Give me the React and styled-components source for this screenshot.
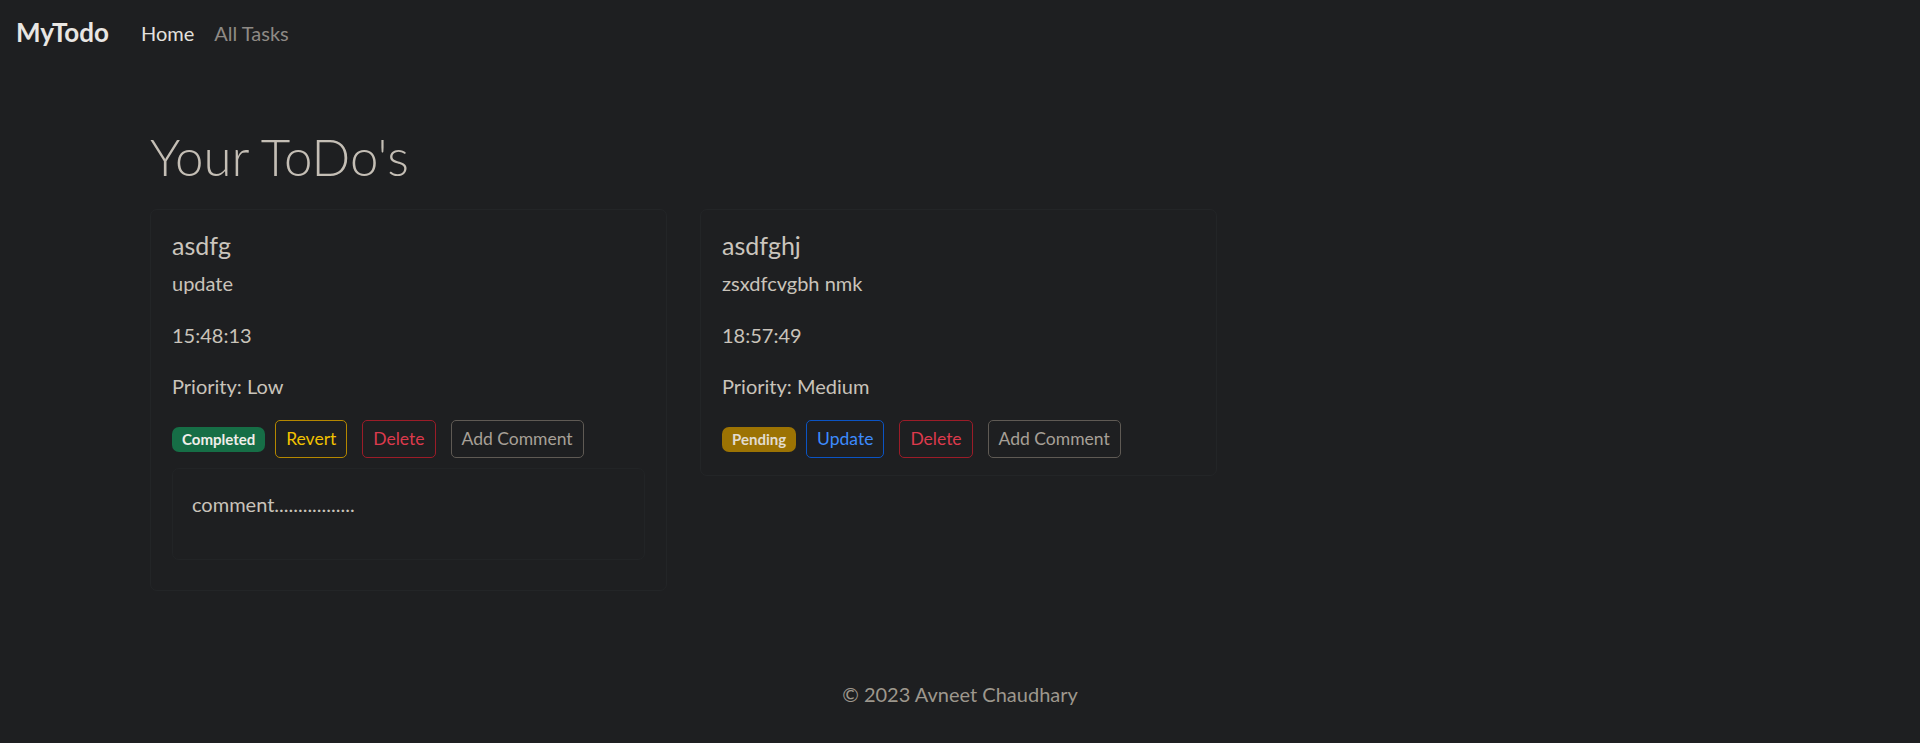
import React from 'react'
import styled, { createGlobalStyle } from 'styled-components';

const GlobalStyle = createGlobalStyle`
  * {
    box-sizing: border-box;
  }

  body {
    margin: 0;
    background-color: #1e1f21;
    color: #c9c3ba;
    font-family: Lato, "Open Sans", sans-serif;
    font-size: 20px;
    line-height: 30px;
  }
`;

const Page = styled.div`
  min-height: 100vh;
  display: flex;
  flex-direction: column;
`;

const Navbar = styled.nav`
  height: 70px;
  display: flex;
  align-items: center;
  padding: 0 16px 5px;
`;

const Brand = styled.a`
  font-size: 26px;
  font-weight: 700;
  line-height: 37px;
  padding: 4px 0;
  margin-right: 22px;
  color: #e8e6e3;
  text-decoration: none;
`;

const NavLink = styled.a`
  padding: 10px;
  color: ${props => props.active ? '#e3e1dd' : '#8e8a85'};
  text-decoration: none;
`;

const Main = styled.main`
  width: 1650px;
  margin: 0 auto;
  padding: 56px 15px 0;
`;

const Title = styled.h1`
  font-size: 51px;
  font-weight: 300;
  line-height: 62px;
  margin: 0 0 21px;
  color: #c4beb5;
`;

const Grid = styled.div`
  display: grid;
  grid-template-columns: repeat(3, 517px);
  column-gap: 33px;
  align-items: start;
`;

const Card = styled.div`
  border: 1px solid #232527;
  border-radius: 7px;
  padding: 20px 21px 17px;
`;

const CardTitle = styled.h5`
  font-size: 25px;
  font-weight: 400;
  line-height: 30px;
  margin: 0 0 8px;
  color: #cbc5bd;
`;

const Text = styled.p`
  margin: 0 0 ${props => props.mb || 21}px;
`;

const Actions = styled.div`
  display: flex;
  align-items: center;
  gap: 15px;
`;

const Badge = styled.span`
  font-size: 15px;
  font-weight: 700;
  line-height: 15px;
  padding: 5px 10px;
  border-radius: 7px;
  margin-right: -5px;
  color: ${props => props.done ? '#f0eeea' : '#e2dcd0'};
  background-color: ${props => props.done ? '#166e46' : '#9c7303'};
`;

const Button = styled.button`
  font-family: inherit;
  font-size: 17.5px;
  line-height: 26px;
  padding: 5px 10px;
  background: transparent;
  border: 1px solid ${props => props.border};
  border-radius: 5px;
  color: ${props => props.color};
  cursor: pointer;
`;

const CommentBox = styled.div`
  margin: 10px 0 13px;
  border: 1px solid #222426;
  border-radius: 7px;
  padding: 20px 19px;
`;

const Footer = styled.footer`
  margin-top: auto;
  padding-bottom: 34px;
  text-align: center;
  color: #9d978d;
`;

const todos = [
  {
    title: 'asdfg',
    desc: 'update',
    time: '15:48:13',
    priority: 'Low',
    done: true,
    comment: 'comment.................',
  },
  {
    title: 'asdfghj',
    desc: 'zsxdfcvgbh nmk',
    time: '18:57:49',
    priority: 'Medium',
    done: false,
  },
];

function TodoCard({ todo }) {
  return (
    <Card>
      <CardTitle>{todo.title}</CardTitle>
      <Text mb={22}>{todo.desc}</Text>
      <Text>{todo.time}</Text>
      <Text mb={19}>Priority: {todo.priority}</Text>
      <Actions>
        <Badge done={todo.done}>{todo.done ? 'Completed' : 'Pending'}</Badge>
        {todo.done
          ? <Button border="#b48700" color="#f2c200">Revert</Button>
          : <Button border="#0b54c4" color="#3d8bfd">Update</Button>}
        <Button border="#9b1c28" color="#dc3a4c">Delete</Button>
        <Button border="#5f5a54" color="#a7a097">Add Comment</Button>
      </Actions>
      {todo.comment && (
        <CommentBox>
          <Text mb={20}>{todo.comment}</Text>
        </CommentBox>
      )}
    </Card>
  );
}

function App() {
  return (
    <Page>
      <GlobalStyle />
      <Navbar>
        <Brand href="#">MyTodo</Brand>
        <NavLink href="#" active>Home</NavLink>
        <NavLink href="#">All Tasks</NavLink>
      </Navbar>
      <Main>
        <Title>Your ToDo's</Title>
        <Grid>
          {todos.map(todo => <TodoCard key={todo.title} todo={todo} />)}
        </Grid>
      </Main>
      <Footer>© 2023 Avneet Chaudhary</Footer>
    </Page>
  )
}

export default App
